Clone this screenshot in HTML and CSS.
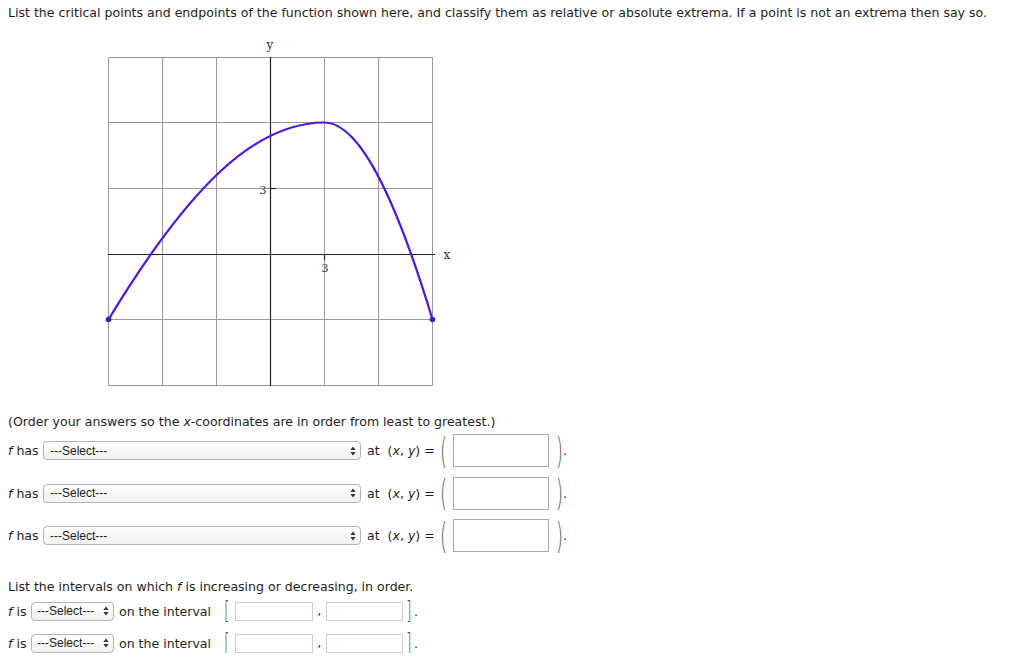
FILE: index.html
```html
<!DOCTYPE html>
<html>
<head>
<meta charset="utf-8">
<link rel="stylesheet" href="styles.css">
</head>
<body>
<p class="question">List the critical points and endpoints of the function shown here, and classify them as relative or absolute extrema. If a point is not an extrema then say so.</p>

<svg class="graph" width="360" height="355" viewBox="100 35 360 355" xmlns="http://www.w3.org/2000/svg">
  <g stroke="#9a9a9a" stroke-width="1" fill="none">
    <line x1="108.5" y1="57.5" x2="108.5" y2="385.5"/>
    <line x1="162.5" y1="57.5" x2="162.5" y2="385.5"/>
    <line x1="216.5" y1="57.5" x2="216.5" y2="385.5"/>
    <line x1="324.5" y1="57.5" x2="324.5" y2="385.5"/>
    <line x1="378.5" y1="57.5" x2="378.5" y2="385.5"/>
    <line x1="432.5" y1="57.5" x2="432.5" y2="385.5"/>
    <line x1="108.5" y1="57.5" x2="432.5" y2="57.5"/>
    <line x1="108.5" y1="122.5" x2="432.5" y2="122.5"/>
    <line x1="108.5" y1="188.5" x2="432.5" y2="188.5"/>
    <line x1="108.5" y1="319.5" x2="432.5" y2="319.5"/>
    <line x1="108.5" y1="385.5" x2="432.5" y2="385.5"/>
  </g>
  <g stroke="#222" stroke-width="1.2" fill="none">
    <line x1="270.5" y1="57" x2="270.5" y2="386"/>
    <line x1="108" y1="254.5" x2="435" y2="254.5"/>
    <line x1="270.5" y1="188.5" x2="276" y2="188.5"/>
    <line x1="324.5" y1="254.5" x2="324.5" y2="260"/>
  </g>
  <g class="axis-label">
    <text x="270" y="49" text-anchor="middle">y</text>
    <text x="447" y="259" text-anchor="middle">x</text>
    <text x="263" y="193.5" text-anchor="middle" class="tick">3</text>
    <text x="325" y="272" text-anchor="middle" class="tick">3</text>
  </g>
  <path d="M108.5,319.5 C188.5,187.5 254.5,122.5 324.5,122.5 C364.5,122.5 402.5,220.5 432.5,319.5" stroke="#4a14f0" stroke-width="2.2" fill="none"/>
  <circle cx="108.5" cy="319.5" r="2.8" fill="#3a1ad0"/>
  <circle cx="432.5" cy="319.5" r="2.8" fill="#3a1ad0"/>
</svg>

<p class="order">(Order your answers so the <i>x</i>-coordinates are in order from least to greatest.)</p>

<div class="extrema">
  <div class="row">
    <span class="lbl"><i>f</i> has</span>
    <div class="select wide"><span>---Select---</span><svg class="arrows" width="6" height="10" viewBox="0 0 6 10"><path d="M3,0.5 L5.6,4 L0.4,4 Z M3,9.5 L5.6,6 L0.4,6 Z" fill="#333"/></svg></div>
    <span class="at">at&nbsp; (<i>x</i>, <i>y</i>) =</span>
    <span class="paren">(</span>
    <span class="box"></span>
    <span class="paren close">)</span><span class="dot">.</span>
  </div>
  <div class="row">
    <span class="lbl"><i>f</i> has</span>
    <div class="select wide"><span>---Select---</span><svg class="arrows" width="6" height="10" viewBox="0 0 6 10"><path d="M3,0.5 L5.6,4 L0.4,4 Z M3,9.5 L5.6,6 L0.4,6 Z" fill="#333"/></svg></div>
    <span class="at">at&nbsp; (<i>x</i>, <i>y</i>) =</span>
    <span class="paren">(</span>
    <span class="box"></span>
    <span class="paren close">)</span><span class="dot">.</span>
  </div>
  <div class="row">
    <span class="lbl"><i>f</i> has</span>
    <div class="select wide"><span>---Select---</span><svg class="arrows" width="6" height="10" viewBox="0 0 6 10"><path d="M3,0.5 L5.6,4 L0.4,4 Z M3,9.5 L5.6,6 L0.4,6 Z" fill="#333"/></svg></div>
    <span class="at">at&nbsp; (<i>x</i>, <i>y</i>) =</span>
    <span class="paren">(</span>
    <span class="box"></span>
    <span class="paren close">)</span><span class="dot">.</span>
  </div>
</div>

<p class="intervals-title">List the intervals on which <i>f</i> is increasing or decreasing, in order.</p>

<div class="intervals">
  <div class="irow">
    <span class="ilbl"><i>f</i> is</span>
    <div class="select narrow"><span>---Select---</span><svg class="arrows" width="6" height="10" viewBox="0 0 6 10"><path d="M3,0.5 L5.6,4 L0.4,4 Z M3,9.5 L5.6,6 L0.4,6 Z" fill="#333"/></svg></div>
    <span class="on">on the interval</span>
    <span class="bracket">[</span>
    <span class="sbox first"></span>
    <span class="comma">,</span>
    <span class="sbox second"></span>
    <span class="bracket close">]</span><span class="idot">.</span>
  </div>
  <div class="irow">
    <span class="ilbl"><i>f</i> is</span>
    <div class="select narrow"><span>---Select---</span><svg class="arrows" width="6" height="10" viewBox="0 0 6 10"><path d="M3,0.5 L5.6,4 L0.4,4 Z M3,9.5 L5.6,6 L0.4,6 Z" fill="#333"/></svg></div>
    <span class="on">on the interval</span>
    <span class="bracket">[</span>
    <span class="sbox first"></span>
    <span class="comma">,</span>
    <span class="sbox second"></span>
    <span class="bracket close">]</span><span class="idot">.</span>
  </div>
</div>
</body>
</html>
```

FILE: styles.css
```css
html, body {
  margin: 0;
  padding: 0;
  background: #fff;
}
body {
  font-family: "DejaVu Sans", Verdana, sans-serif;
  font-size: 12.55px;
  color: #1e1e1e;
  padding: 0 8px;
}
p {
  margin: 0;
  line-height: 16px;
}
.question {
  padding-top: 5px;
  white-space: nowrap;
}
.graph {
  display: block;
  margin-left: 92px;
  margin-top: 14px;
}
.axis-label text {
  font-family: "DejaVu Serif", "Liberation Serif", serif;
  font-size: 12px;
  fill: #333;
}
.axis-label text.tick {
  font-size: 11.5px;
  fill: #444;
}
.order {
  margin-top: 24px;
}
.extrema {
  margin-top: 4px;
  display: flex;
  flex-direction: column;
  gap: 9.5px;
}
.row {
  display: flex;
  align-items: center;
  height: 33px;
}
.lbl {
  width: 35px;
  flex: none;
}
.select {
  flex: none;
  box-sizing: border-box;
  height: 19px;
  border: 1px solid #b3b3b3;
  border-radius: 4px;
  background: linear-gradient(#fefefe, #f1f1f1);
  display: flex;
  align-items: center;
  justify-content: space-between;
  padding: 0 4px 0 6px;
  font-family: "Liberation Sans", Arial, sans-serif;
  font-size: 12px;
  color: #222;
}
.select.wide {
  width: 318px;
}
.select.narrow {
  width: 83px;
  padding-left: 5px;
}
.arrows {
  display: block;
}
.at {
  flex: none;
  width: 73px;
  margin-left: 6px;
  white-space: nowrap;
}
.paren {
  flex: none;
  width: 13px;
  font-family: "DejaVu Sans", sans-serif;
  font-weight: 200;
  font-size: 20px;
  color: #555;
  transform: scale(0.9, 1.75);
  transform-origin: left center;
  line-height: 20px;
}
.paren.close {
  width: 6px;
  margin-left: 7px;
}
.box {
  flex: none;
  box-sizing: border-box;
  width: 96px;
  height: 33px;
  border: 1px solid #a9a9a9;
  background: #fff;
}
.dot {
  margin-left: 1px;
}
.intervals-title {
  margin-top: 27px;
}
.intervals {
  margin-top: 6px;
  display: flex;
  flex-direction: column;
  gap: 12px;
}
.irow {
  display: flex;
  align-items: center;
  height: 20px;
}
.ilbl {
  width: 23px;
  flex: none;
}
.on {
  margin-left: 5px;
  width: 105px;
  flex: none;
  white-space: nowrap;
}
.bracket {
  flex: none;
  width: 11px;
  font-weight: 200;
  font-size: 16px;
  color: #555;
  transform: scale(0.9, 1.55);
  transform-origin: left center;
  line-height: 16px;
}
.bracket.close {
  width: 8px;
  margin-left: 3px;
}
.sbox {
  flex: none;
  box-sizing: border-box;
  height: 19px;
  border: 1px solid #cfcfcf;
  background: #fff;
}
.sbox.first {
  width: 78px;
}
.sbox.second {
  width: 77px;
}
.comma {
  width: 13px;
  flex: none;
  text-align: center;
  font-size: 12px;
}
.idot {
  margin-left: 0;
}
```
